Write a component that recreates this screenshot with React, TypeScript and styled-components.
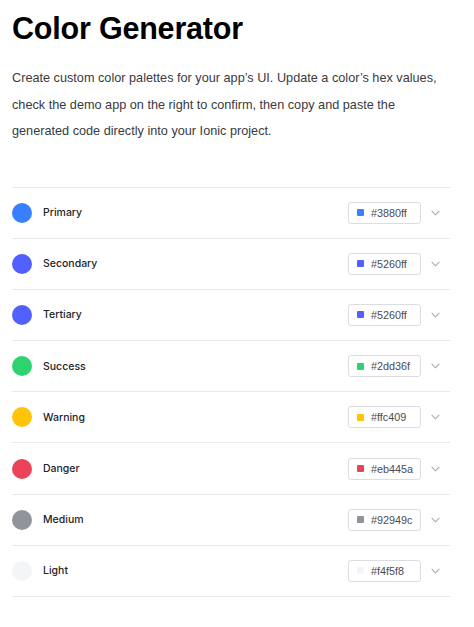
import React from "react"
import styled, { createGlobalStyle } from "styled-components"

interface ColorEntry {
  name: string
  hex: string
}

const colors: ColorEntry[] = [
  { name: "Primary", hex: "#3880ff" },
  { name: "Secondary", hex: "#5260ff" },
  { name: "Tertiary", hex: "#5260ff" },
  { name: "Success", hex: "#2dd36f" },
  { name: "Warning", hex: "#ffc409" },
  { name: "Danger", hex: "#eb445a" },
  { name: "Medium", hex: "#92949c" },
  { name: "Light", hex: "#f4f5f8" },
]

const GlobalStyle = createGlobalStyle`
  * { box-sizing: border-box; }
  body {
    margin: 0;
    background: #ffffff;
    font-family: "Liberation Sans", Arial, sans-serif;
    -webkit-font-smoothing: antialiased;
  }
`

export default function App() {
  return (
    <>
      <GlobalStyle />
      <Page>
        <Title>Color Generator</Title>
        <Intro>
          Create custom color palettes for your app’s UI. Update a color’s hex values,
          check the demo app on the right to confirm, then copy and paste the
          generated code directly into your Ionic project.
        </Intro>
        <List>
          {colors.map(c => (
            <Row key={c.name}>
              <Swatch color={c.hex} />
              <Label>{c.name}</Label>
              <HexField>
                <HexDot color={c.hex} />
                <HexText>{c.hex}</HexText>
              </HexField>
              <Chevron viewBox="0 0 10 6">
                <path d="M1 1l4 4 4-4" />
              </Chevron>
            </Row>
          ))}
        </List>
      </Page>
    </>
  )
}

const Page = styled.div`
  padding: 8px 24px 0 12px;
`

const Title = styled.h1`
  margin: 0;
  font-size: 30.5px;
  line-height: 40px;
  font-weight: 700;
  letter-spacing: -0.2px;
  color: #000000;
`

const Intro = styled.p`
  margin: 17px 0 0;
  font-size: 12.7px;
  line-height: 26.5px;
  color: #3a3a3e;
`

const List = styled.ul`
  list-style: none;
  margin: 42px 0 0;
  padding: 0;
  border-top: 1.5px solid #e9e9ec;
`

const Row = styled.li`
  display: flex;
  align-items: center;
  height: 51.2px;
  border-bottom: 1.5px solid #e9e9ec;
`

const Swatch = styled.span<{ color: string }>`
  width: 20px;
  height: 20px;
  border-radius: 50%;
  background: ${p => p.color};
  flex-shrink: 0;
`

const Label = styled.span`
  margin-left: 11px;
  flex: 1;
  font-family: Inter, "Liberation Sans", sans-serif;
  font-size: 10.5px;
  font-weight: 500;
  color: #222428;
`

const HexField = styled.div`
  display: flex;
  align-items: center;
  width: 73px;
  height: 22px;
  padding-left: 8px;
  border: 1px solid #dcdde2;
  border-radius: 3px;
  background: #ffffff;
`

const HexDot = styled.span<{ color: string }>`
  width: 7px;
  height: 7px;
  border-radius: 1px;
  background: ${p => p.color};
`

const HexText = styled.span`
  margin-left: 7px;
  font-size: 10.8px;
  color: #4a4b52;
`

const Chevron = styled.svg`
  width: 9px;
  height: 6px;
  margin: 0 10px 0 10px;
  fill: none;
  stroke: #a9abb2;
  stroke-width: 1.2;
  stroke-linecap: round;
  stroke-linejoin: round;
`
